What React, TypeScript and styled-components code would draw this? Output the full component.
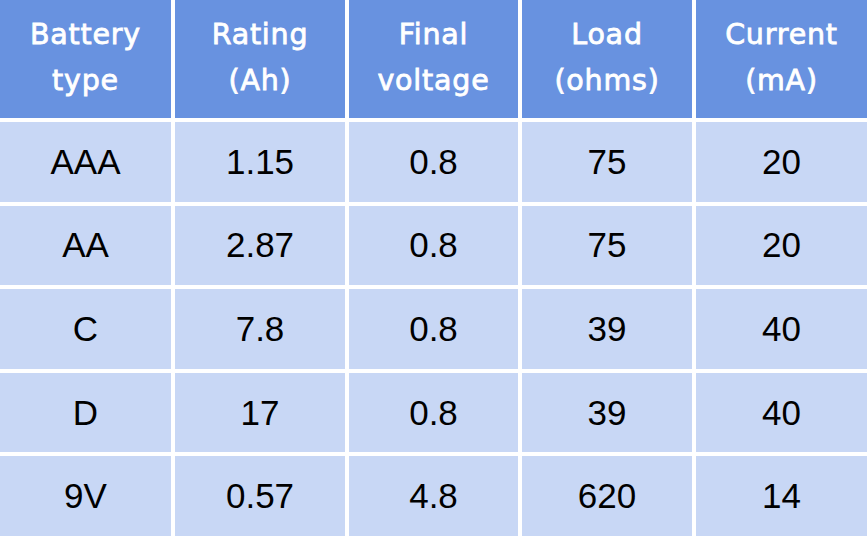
import * as React from 'react';
import styled, { createGlobalStyle } from 'styled-components';

const GlobalStyle = createGlobalStyle`
    html, body {
        margin: 0;
        padding: 0;
        background: #fff;
    }
`;

const headerLines = [
    ['Battery', 'type'],
    ['Rating', '(Ah)'],
    ['Final', 'voltage'],
    ['Load', '(ohms)'],
    ['Current', '(mA)'],
];

const rows = [
    ['AAA', '1.15', '0.8', '75', '20'],
    ['AA', '2.87', '0.8', '75', '20'],
    ['C', '7.8', '0.8', '39', '40'],
    ['D', '17', '0.8', '39', '40'],
    ['9V', '0.57', '4.8', '620', '14'],
];

const App = () => {
    return (
        <>
            <GlobalStyle />
            <Table role="table">
                {headerLines.map((lines) => (
                    <HeadCell key={lines[0]} role="columnheader">
                        {lines.map((line) => (
                            <span key={line}>{line}</span>
                        ))}
                    </HeadCell>
                ))}
                {rows.map((row) =>
                    row.map((value, j) => (
                        <Cell key={`${row[0]}-${j}`} role="cell">
                            {value}
                        </Cell>
                    ))
                )}
            </Table>
        </>
    );
};

const Table = styled.div`
    width: 867px;
    height: 537px;
    overflow: hidden;
    display: grid;
    grid-template-columns: 171px 170px 169px 170px 171px;
    grid-template-rows: 118px repeat(5, 79.6px);
    gap: 4px;
    background: #fff;
`;

const HeadCell = styled.div`
    background: #6892e0;
    color: #fff;
    display: flex;
    flex-direction: column;
    align-items: center;
    justify-content: center;
    font-family: 'DejaVu Sans', 'Noto Sans', sans-serif;
    font-weight: 400;
    font-size: 28.5px;
    letter-spacing: 0.8px;
    -webkit-text-stroke: 0.8px #fff;
    line-height: 46px;
    padding-bottom: 2px;
    box-sizing: border-box;
`;

const Cell = styled.div`
    background: #c8d7f5;
    color: #000;
    display: flex;
    align-items: center;
    justify-content: center;
    font-family: 'Liberation Sans', Arial, sans-serif;
    font-size: 35px;
`;

export default App;
